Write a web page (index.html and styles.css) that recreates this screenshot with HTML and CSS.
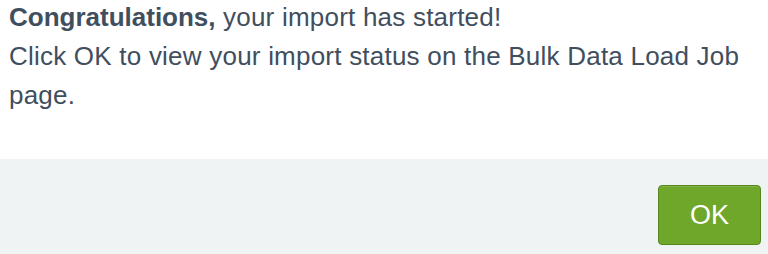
FILE: index.html
```html
<!DOCTYPE html>
<html>
<head>
<meta charset="utf-8">
<link rel="stylesheet" href="styles.css">
</head>
<body>
<div class="dialog">
  <div class="body">
    <p class="msg"><strong>Congratulations,</strong> your import has started!<br>Click OK to view your import status on the Bulk Data Load Job page.</p>
  </div>
  <div class="footer">
    <button class="ok">OK</button>
  </div>
</div>
</body>
</html>
```
FILE: styles.css
```css
html, body {
  margin: 0;
  padding: 0;
  background: #ffffff;
}
.dialog {
  width: 768px;
  height: 254px;
  display: flex;
  flex-direction: column;
  font-family: "Liberation Sans", Arial, sans-serif;
}
.body {
  height: 159px;
  padding: 0 18px 0 9px;
  box-sizing: border-box;
}
.msg {
  margin: -2.5px 0 0 0;
  font-size: 26px;
  line-height: 39px;
  letter-spacing: 0.22px;
  color: #414e5e;
}
.msg strong {
  font-weight: bold;
  letter-spacing: 0;
}
.footer {
  flex: 1;
  background: #f0f3f3;
  display: flex;
  justify-content: flex-end;
  align-items: flex-start;
  padding: 26px 7px 0 0;
}
.ok {
  width: 103px;
  height: 60px;
  box-sizing: border-box;
  background: #6ea729;
  border: 1px solid #58861f;
  border-radius: 4px;
  color: #ffffff;
  font-family: "Liberation Sans", Arial, sans-serif;
  font-size: 27px;
  padding: 0;
  box-shadow: inset 0 1px 0 rgba(255,255,255,0.15);
}
```
